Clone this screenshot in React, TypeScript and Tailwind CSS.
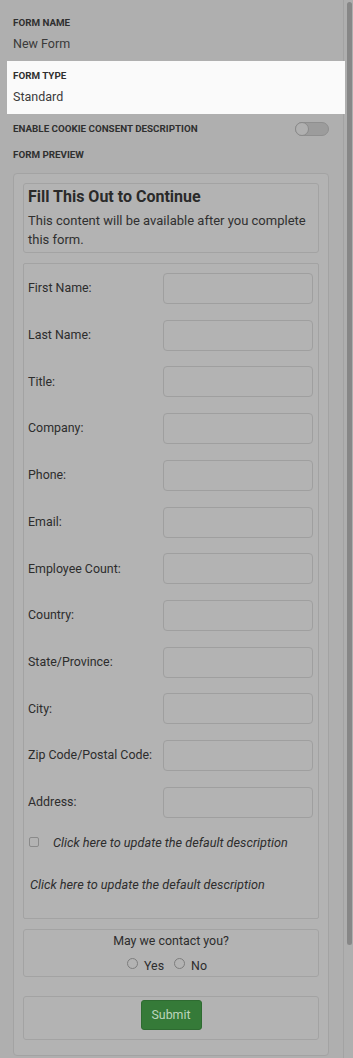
const fields = [
  "First Name:",
  "Last Name:",
  "Title:",
  "Company:",
  "Phone:",
  "Email:",
  "Employee Count:",
  "Country:",
  "State/Province:",
  "City:",
  "Zip Code/Postal Code:",
  "Address:",
];

function SettingBlock({ label, value }: { label: string; value: string }) {
  return (
    <div className="flex h-[53px] flex-col pt-[9px]">
      <div className="text-[9.8px] font-bold uppercase leading-[12px] text-[#2f2f2f]">{label}</div>
      <div className="mt-[7px] text-[12.5px] leading-[16px] text-[#3a3a3a]">{value}</div>
    </div>
  );
}

function FormPreview() {
  return (
    <div className="mx-[13px] mr-[14px] mt-[12px] rounded-[4px] border border-[#a3a3a3] bg-[#b3b3b3] px-[9px] pb-[15px] pt-[9px]">
      <div className="h-[70px] rounded-[3px] border border-[#a3a3a3] px-[4px] pt-[2px]">
        <div className="text-[16px] font-bold leading-[22px] text-[#2a2a2a]">Fill This Out to Continue</div>
        <p className="mt-[3px] text-[13px] leading-[19px] text-[#303030]">
          This content will be available after you complete this form.
        </p>
      </div>

      <div className="mt-[10px] h-[656px] rounded-[2px] border border-[#a3a3a3] pl-[4px] pr-[5px] pt-[9px]">
        {fields.map((f) => (
          <div key={f} className="flex h-[46.73px] items-start">
            <div className="flex h-[31px] w-[135px] items-center text-[12.4px] text-[#2d2d2d]">{f}</div>
            <div className="h-[31px] flex-1 rounded-[4px] border border-[#9f9f9f]" />
          </div>
        ))}
        <div className="-mt-[1px] flex items-center">
          <span className="ml-[1px] h-[10px] w-[10px] rounded-[2px] border border-[#8a8a8a]" />
          <span className="ml-[14px] text-[12.7px] italic text-[#2d2d2d]">
            Click here to update the default description
          </span>
        </div>
        <div className="mt-[23px] pl-[2px] text-[12.7px] italic text-[#2d2d2d]">
          Click here to update the default description
        </div>
      </div>

      <div className="mt-[10px] flex h-[48px] flex-col items-center rounded-[3px] border border-[#a3a3a3] pt-[3px]">
        <div className="text-[12.4px] leading-[16px] text-[#2d2d2d]">May we contact you?</div>
        <div className="mt-[9px] flex items-center pr-[8px] text-[12.4px] leading-[14px] text-[#2d2d2d]">
          <span className="mb-[4px] h-[11px] w-[11px] rounded-full border border-[#7d7d7d]" />
          <span className="ml-[6px]">Yes</span>
          <span className="mb-[4px] ml-[10px] h-[11px] w-[11px] rounded-full border border-[#7d7d7d]" />
          <span className="ml-[6px]">No</span>
        </div>
      </div>

      <div className="mt-[19px] flex h-[44px] justify-center rounded-[3px] border border-[#a3a3a3] pt-[3px]">
        <button
          type="button"
          className="h-[30px] w-[61px] rounded-[3px] border border-[#2e6b31] bg-[#357a38] text-[12.4px] text-[#bcd6bc]"
        >
          Submit
        </button>
      </div>
    </div>
  );
}

export default function App() {
  return (
    <div
      className="flex h-[1058px] w-[353px] overflow-hidden bg-[#afafaf]"
      style={{ fontFamily: "Roboto, 'Liberation Sans', sans-serif" }}
    >
      <div className="relative w-[344px] shrink-0 border-r border-[#a3a3a3] pt-[8px]">
        <div className="pl-[13px]">
          <SettingBlock label="Form Name" value="New Form" />
        </div>
        <div className="relative z-10 -mr-[2px] ml-[7px] bg-[#fafafa] pl-[6px]">
          <SettingBlock label="Form Type" value="Standard" />
        </div>
        <div className="flex h-[30px] items-center pl-[13px] pr-[14px]">
          <span className="flex-1 text-[9.8px] font-bold uppercase text-[#2f2f2f]">
            Enable Cookie Consent Description
          </span>
          <span className="relative h-[14px] w-[34px] rounded-full border border-[#8f8f8f] bg-[#9c9c9c]">
            <span className="absolute -left-[1px] -top-[1px] h-[14px] w-[14px] rounded-full border border-[#8a8a8a] bg-[#b0b0b0]" />
          </span>
        </div>
        <div className="mt-[5px] pl-[13px] text-[9.8px] font-bold uppercase leading-[12px] text-[#2f2f2f]">
          Form Preview
        </div>
        <FormPreview />
      </div>
      <div className="flex-1 pl-[3px] pr-[1px] pt-[2px]">
        <div className="h-[943px] rounded-full bg-[#878787]" />
      </div>
    </div>
  );
}
